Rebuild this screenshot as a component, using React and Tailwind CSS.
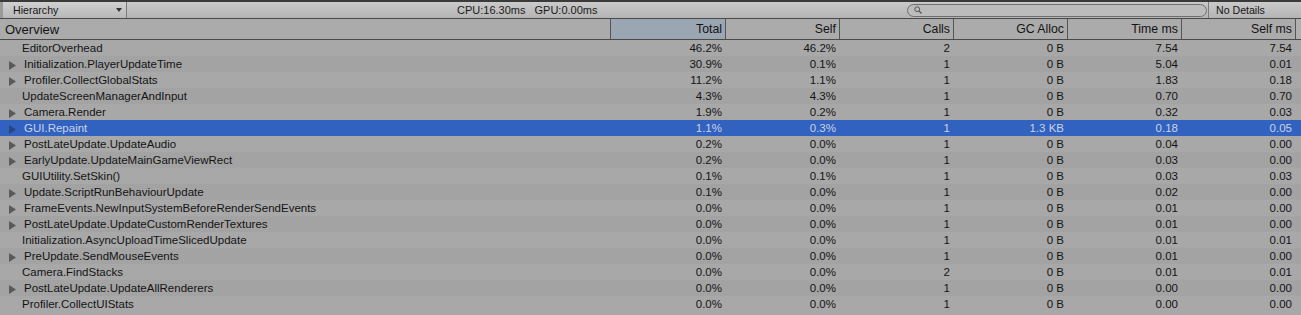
import React from "react";

const rows = [
  { name: "EditorOverhead", total: "46.2%", self: "46.2%", calls: "2", gc: "0 B", time: "7.54", selfMs: "7.54" },
  { name: "Initialization.PlayerUpdateTime", arrow: true, total: "30.9%", self: "0.1%", calls: "1", gc: "0 B", time: "5.04", selfMs: "0.01" },
  { name: "Profiler.CollectGlobalStats", arrow: true, total: "11.2%", self: "1.1%", calls: "1", gc: "0 B", time: "1.83", selfMs: "0.18" },
  { name: "UpdateScreenManagerAndInput", total: "4.3%", self: "4.3%", calls: "1", gc: "0 B", time: "0.70", selfMs: "0.70" },
  { name: "Camera.Render", arrow: true, total: "1.9%", self: "0.2%", calls: "1", gc: "0 B", time: "0.32", selfMs: "0.03" },
  { name: "GUI.Repaint", arrow: true, selected: true, total: "1.1%", self: "0.3%", calls: "1", gc: "1.3 KB", time: "0.18", selfMs: "0.05" },
  { name: "PostLateUpdate.UpdateAudio", arrow: true, total: "0.2%", self: "0.0%", calls: "1", gc: "0 B", time: "0.04", selfMs: "0.00" },
  { name: "EarlyUpdate.UpdateMainGameViewRect", arrow: true, total: "0.2%", self: "0.0%", calls: "1", gc: "0 B", time: "0.03", selfMs: "0.00" },
  { name: "GUIUtility.SetSkin()", total: "0.1%", self: "0.1%", calls: "1", gc: "0 B", time: "0.03", selfMs: "0.03" },
  { name: "Update.ScriptRunBehaviourUpdate", arrow: true, total: "0.1%", self: "0.0%", calls: "1", gc: "0 B", time: "0.02", selfMs: "0.00" },
  { name: "FrameEvents.NewInputSystemBeforeRenderSendEvents", arrow: true, total: "0.0%", self: "0.0%", calls: "1", gc: "0 B", time: "0.01", selfMs: "0.00" },
  { name: "PostLateUpdate.UpdateCustomRenderTextures", arrow: true, total: "0.0%", self: "0.0%", calls: "1", gc: "0 B", time: "0.01", selfMs: "0.00" },
  { name: "Initialization.AsyncUploadTimeSlicedUpdate", total: "0.0%", self: "0.0%", calls: "1", gc: "0 B", time: "0.01", selfMs: "0.01" },
  { name: "PreUpdate.SendMouseEvents", arrow: true, total: "0.0%", self: "0.0%", calls: "1", gc: "0 B", time: "0.01", selfMs: "0.00" },
  { name: "Camera.FindStacks", total: "0.0%", self: "0.0%", calls: "2", gc: "0 B", time: "0.01", selfMs: "0.01" },
  { name: "PostLateUpdate.UpdateAllRenderers", arrow: true, total: "0.0%", self: "0.0%", calls: "1", gc: "0 B", time: "0.00", selfMs: "0.00" },
  { name: "Profiler.CollectUIStats", total: "0.0%", self: "0.0%", calls: "1", gc: "0 B", time: "0.00", selfMs: "0.00" },
];

const cols = [
  ["Total", "total"],
  ["Self", "self"],
  ["Calls", "calls"],
  ["GC Alloc", "gc"],
  ["Time ms", "time"],
  ["Self ms", "selfMs"],
];

const Arrow = ({ color }) => (
  <svg width="7" height="9" viewBox="0 0 7 9" className="shrink-0">
    <path d="M0 0 L7 4.5 L0 9 Z" fill={color} />
  </svg>
);

export default function App() {
  return (
    <div
      className="w-[1301px] h-[315px] overflow-hidden bg-[#a8a8a8] text-[11.5px] text-[#141414] leading-none"
      style={{ fontFamily: '"Liberation Sans", Arial, sans-serif' }}
    >
      {/* timeline strip cut off at top */}
      <div className="h-[2px] bg-[#3a3a3a]" />

      {/* toolbar */}
      <div className="h-[17px] flex items-stretch bg-gradient-to-b from-[#cacaca] to-[#b4b4b4] border-b border-[#4a4a4a] text-[10.6px]">
        <div className="w-[3px] bg-[#9a9a9a]" />
        <div className="w-[124px] flex items-center justify-between pl-[10px] pr-[4px] border-r border-[#7c7c7c] bg-gradient-to-b from-[#d0d0d0] to-[#b8b8b8]">
          <span>Hierarchy</span>
          <svg width="6" height="4" viewBox="0 0 6 4">
            <path d="M0 0 L6 0 L3 4 Z" fill="#333" />
          </svg>
        </div>
        <div className="w-[330px]" />
        <div className="flex items-center gap-[9px] text-[11px] text-[#1a1a1a]">
          <span>CPU:16.30ms</span>
          <span>GPU:0.00ms</span>
        </div>
        <div className="flex-1" />
        <div className="w-[300px] flex items-center mr-[1px]">
          <div className="w-full h-[13px] rounded-full border border-[#6e6e6e] bg-[#bcbcbc] flex items-center pl-[6px]">
            <svg width="8" height="8" viewBox="0 0 8 8">
              <circle cx="3.2" cy="3.2" r="2.4" fill="none" stroke="#555" strokeWidth="1" />
              <path d="M5 5 L7.5 7.5" stroke="#555" strokeWidth="1.2" />
            </svg>
          </div>
        </div>
        <div className="w-[93px] flex items-center pl-[7px] border-l border-[#7c7c7c]">
          No Details
        </div>
      </div>

      {/* header */}
      <div className="h-[21px] flex bg-[#ababab] border-b border-[#4a4a4a]">
        <div className="w-[611px] flex items-center pl-[5px] pt-[1px] border-r border-[#555] text-[13px]">
          Overview
        </div>
        {cols.map(([label], i) => (
          <div
            key={label}
            className={
              "flex items-center justify-end pr-[3px] pt-[1px] border-r border-[#555] text-[12.3px] " +
              (i === 0 ? "bg-[#9ba6b3] w-[115px]" : "w-[114px]")
            }
          >
            {label}
          </div>
        ))}
        <div className="flex-1 bg-[#b0b0b0]" />
      </div>

      {/* rows */}
      {rows.map((r, idx) => (
        <div
          key={r.name}
          className={
            "h-[16px] flex items-center pt-[2px] " +
            (r.selected
              ? "bg-[#3162bf] text-[#c9d3e6]"
              : idx % 2 === 0
              ? "bg-[#a8a8a8]"
              : "bg-[#a3a3a3]")
          }
        >
          <div className="w-[611px] flex items-center pl-[9px]">
            {r.arrow ? (
              <>
                <Arrow color={r.selected ? "#27457f" : "#5a5a5a"} />
                <span className="ml-[8px]">{r.name}</span>
              </>
            ) : (
              <span className="ml-[13px]">{r.name}</span>
            )}
          </div>
          {cols.map(([label, key], i) => (
            <div
              key={key}
              className={
                "text-right pr-[4px] " + (i === 0 ? "w-[115px]" : "w-[114px]")
              }
            >
              {r[key]}
            </div>
          ))}
        </div>
      ))}
    </div>
  );
}
